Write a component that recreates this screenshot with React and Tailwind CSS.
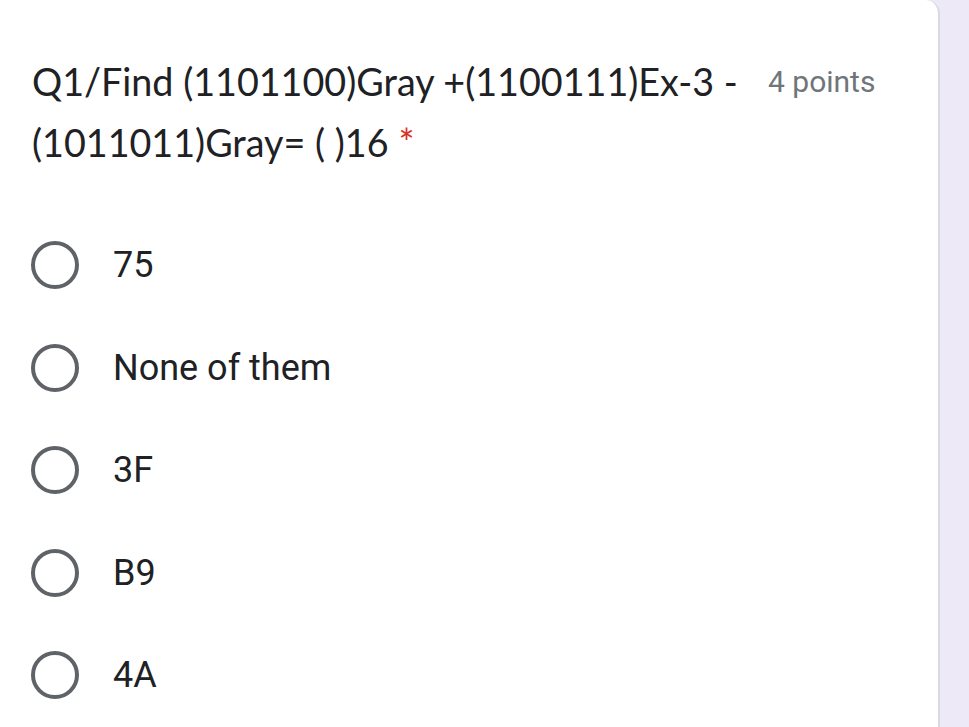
import React from 'react';

const options = ['75', 'None of them', '3F', 'B9', '4A'];

const Radio = () => (
  <span className="block w-[48px] h-[48px] rounded-full border-[4px] border-[#5f6368] shrink-0" />
);

const App = () => {
  return (
    <div className="flex h-[727px] w-[969px] overflow-hidden bg-[#ede9f7]">
      <div className="w-[940px] shrink-0 bg-white border-r-2 border-[#d9d9e0] rounded-tr-[14px]">
        <div className="pl-[32px] pt-[51px] flex items-start" style={{ fontFamily: 'Lato, "Noto Sans", sans-serif' }}>
          <div className="w-[722px] text-[37.7px] leading-[61px] text-[#202124]">
            Q1/Find (1101100)Gray +(1100111)Ex-3 - (1011011)Gray= ( )16
            <span className="ml-[10px] text-[#d93025]">*</span>
          </div>
          <div className="ml-[14px] text-[30px] leading-[61px] text-[#70757a]" style={{ fontFamily: 'Roboto, sans-serif' }}>
            4 points
          </div>
        </div>

        <div className="pl-[31px] pt-[68px] flex flex-col gap-[54.5px]" style={{ fontFamily: 'Roboto, sans-serif' }}>
          {options.map((opt) => (
            <div key={opt} className="flex items-center h-[48px]">
              <Radio />
              <span className="ml-[34px] text-[36px] text-[#202124]">{opt}</span>
            </div>
          ))}
        </div>
      </div>
    </div>
  );
};

export default App;
